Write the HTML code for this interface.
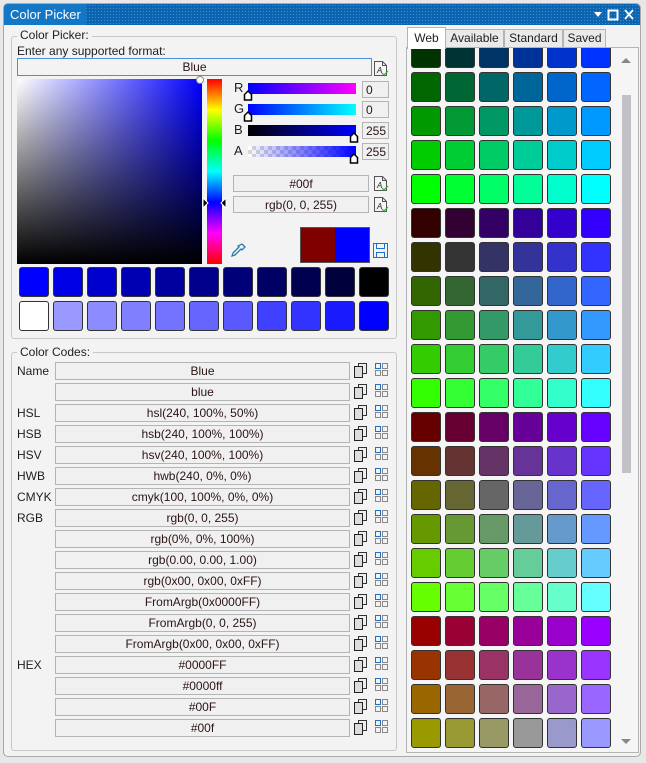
<!DOCTYPE html>
<html><head><meta charset="utf-8">
<style>
*{box-sizing:border-box;margin:0;padding:0}
body{width:646px;height:763px;background:#e8e8e8;font-family:"Liberation Sans",sans-serif;font-size:12px;color:#1e1e1e;position:relative;overflow:hidden}
.a{position:absolute}
.win{left:3px;top:3px;width:638px;height:754px;background:#f3f3f3;border:1px solid #a9a9a9;border-radius:5px;overflow:hidden}
.title{left:0;top:0;width:638px;height:21px;background:#0b64b0;background-image:radial-gradient(#3a8ad0 0.7px,transparent 0.8px);background-size:3px 3px}
.ttl{left:0;top:0;width:82px;height:21px;background:#1377c8;color:#fff;font-size:13px;line-height:21px;padding-left:6px}
.gb{border:1px solid #c8c8c8;border-radius:3px}
.gl{background:#f3f3f3;padding:0 3px;font-size:12px;line-height:13px}
.tb{background:#f0f0f0;border:1px solid #b4b4b4;text-align:center;line-height:16px;font-size:12px;color:#2a1414}
.sw{border:1px solid #333;border-radius:3px}
.lbl{font-size:12px}
</style></head><body>
<div class="a win">
 <div class="a title"><div class="a ttl">Color Picker</div>
  <svg class="a" style="left:586px;top:5px" width="50" height="12"><path d="M4 3h8l-4 5z" fill="#fff"/><rect x="18.5" y="1.5" width="9" height="9" fill="none" stroke="#fff" stroke-width="2"/><path d="M35 1l8 9M43 1l-8 9" stroke="#fff" stroke-width="1.8"/></svg>
 </div>
</div>
<div class="a gb" style="left:11px;top:36px;width:386px;height:303px"></div>
<div class="a gl" style="left:17px;top:29px">Color Picker:</div>
<div class="a lbl" style="left:17px;top:44px">Enter any supported format:</div>
<div class="a tb" style="left:17px;top:58px;width:355px;height:18px;border-color:#4a90d9;background:#f3f3f3">Blue</div>
<svg class="a" style="left:373px;top:60px" width="16" height="17"></svg>
<div class="a" style="left:17px;top:79px;width:185px;height:185px;background:linear-gradient(to bottom,rgba(0,0,0,0),#000),linear-gradient(to right,#fff,#00f)"></div>
<div class="a" style="left:196px;top:76px;width:8px;height:8px;border:1px solid #888;border-radius:50%;background:#fff"></div>
<div class="a" style="left:207px;top:79px;width:15px;height:185px;background:linear-gradient(#f00,#ff0 16.7%,#0f0 33.3%,#0ff 50%,#00f 66.7%,#f0f 83.3%,#f00)"></div>
<svg class="a" style="left:202px;top:197px" width="25" height="12"><path d="M1 1l5 5-5 5z" fill="#000" stroke="#fff"/><path d="M24 1l-5 5 5 5z" fill="#000" stroke="#fff"/></svg>
<div class="a" style="left:234px;top:80px;font-size:13px">R</div>
<div class="a" style="left:234px;top:101px;font-size:13px">G</div>
<div class="a" style="left:234px;top:122px;font-size:13px">B</div>
<div class="a" style="left:234px;top:143px;font-size:13px">A</div>
<div class="a" style="left:248px;top:83px;width:108px;height:11px;background:linear-gradient(to right,#00f,#f0f)"></div>
<div class="a" style="left:248px;top:104px;width:108px;height:11px;background:linear-gradient(to right,#00f,#0ff)"></div>
<div class="a" style="left:248px;top:125px;width:108px;height:11px;background:linear-gradient(to right,#000,#00f)"></div>
<div class="a" style="left:248px;top:146px;width:108px;height:11px;background:linear-gradient(to right,rgba(0,0,255,0),#00f),repeating-conic-gradient(#d8d8d8 0 25%,#fff 0 50%) 0 0/8px 8px"></div>
<svg class="a" style="left:243px;top:89px" width="10" height="12"><path d="M1.5 11V5.5L5 2l3.5 3.5V11z" fill="#fff" stroke="#000" stroke-width="1.5"/></svg>
<svg class="a" style="left:243px;top:110px" width="10" height="12"><path d="M1.5 11V5.5L5 2l3.5 3.5V11z" fill="#fff" stroke="#000" stroke-width="1.5"/></svg>
<svg class="a" style="left:349px;top:131px" width="10" height="12"><path d="M1.5 11V5.5L5 2l3.5 3.5V11z" fill="#fff" stroke="#000" stroke-width="1.5"/></svg>
<svg class="a" style="left:349px;top:152px" width="10" height="12"><path d="M1.5 11V5.5L5 2l3.5 3.5V11z" fill="#fff" stroke="#000" stroke-width="1.5"/></svg>
<div class="a tb" style="left:362px;top:81px;width:27px;height:17px;text-align:left;padding-left:3px">0</div>
<div class="a tb" style="left:362px;top:101px;width:27px;height:17px;text-align:left;padding-left:3px">0</div>
<div class="a tb" style="left:362px;top:122px;width:27px;height:17px;text-align:left;padding-left:3px">255</div>
<div class="a tb" style="left:362px;top:143px;width:27px;height:17px;text-align:left;padding-left:3px">255</div>
<div class="a tb" style="left:233px;top:175px;width:136px;height:17px">#00f</div>
<div class="a tb" style="left:233px;top:196px;width:136px;height:17px">rgb(0, 0, 255)</div>
<svg class="a" style="left:373px;top:175px" width="16" height="17"></svg>
<svg class="a" style="left:373px;top:196px" width="16" height="17"></svg>
<svg class="a" style="left:230px;top:242px" width="16" height="18"><path d="M12 2l3 3-3 3-1-1-6 6-3 1 1-3 6-6-1-1z" fill="none" stroke="#2a7ab0" stroke-width="1.3"/></svg>
<div class="a" style="left:300px;top:227px;width:70px;height:36px;border:1px solid #555;background:linear-gradient(to right,#800000 50%,#00f 50%)"></div>
<svg class="a" style="left:373px;top:243px" width="16" height="16"><rect x="0.5" y="0.5" width="14" height="14" fill="none" stroke="#1a6fd0"/><rect x="3.5" y="0.5" width="8" height="5" fill="none" stroke="#1a6fd0"/><rect x="3.5" y="9.5" width="8" height="5" fill="none" stroke="#1a6fd0"/></svg>
<div id="sw"></div>
<div class="a gb" style="left:11px;top:352px;width:386px;height:399px"></div>
<div class="a gl" style="left:17px;top:346px">Color Codes:</div>
<div id="codes"></div>
<div class="a" style="left:406px;top:47px;width:233px;height:706px;border:1px solid #b4b4b4;background:#f5f5f5;overflow:hidden"><div id="pal"></div>
 <div class="a" style="left:215px;top:47px;width:9px;height:378px;background:#c2c2c6"></div>
 <svg class="a" style="left:213px;top:9px" width="12" height="8"><path d="M1 6l5-5 5 5z" fill="#888"/></svg>
 <svg class="a" style="left:213px;top:690px" width="12" height="8"><path d="M1 1l5 5 5-5z" fill="#888"/></svg>
</div>
<div class="a" style="left:445px;top:29px;width:59px;height:19px;border:1px solid #b4b4b4;background:#eaeaea;text-align:center;line-height:17px">Available</div>
<div class="a" style="left:504px;top:29px;width:59px;height:19px;border:1px solid #b4b4b4;background:#eaeaea;text-align:center;line-height:17px">Standard</div>
<div class="a" style="left:563px;top:29px;width:43px;height:19px;border:1px solid #b4b4b4;background:#eaeaea;text-align:center;line-height:17px">Saved</div>
<div class="a" style="left:407px;top:27px;width:39px;height:22px;border:1px solid #b4b4b4;border-bottom:none;background:#fff;text-align:center;line-height:20px">Web</div>
<script>
function icA(){return '<path d="M1.5 1.5h8l4 4v10h-12z" fill="#f5f5f5" stroke="#555"/><path d="M9.5 1.5v4h4" fill="none" stroke="#555"/><text x="4" y="13" font-size="8" font-style="italic" fill="#222" font-family="Liberation Sans">A</text><path d="M9 13l2 2 4-4" fill="none" stroke="#3a3" stroke-width="1.2"/>';}
document.querySelectorAll('svg[width="16"][height="17"]').forEach(s=>s.innerHTML=icA());
var h='';
var r1=['#0000ff','#0000e6','#0000cc','#0000b3','#00009f','#00008c','#000078','#000064','#000050','#00003c','#000000'];
var r2=['#ffffff','#9999ff','#8c8cff','#8080ff','#7373ff','#6666ff','#5959ff','#4040ff','#3333ff','#1a1aff','#0000ff'];
for(var i=0;i<11;i++){h+='<div class="a sw" style="left:'+(19+i*34)+'px;top:267px;width:30px;height:30px;background:'+r1[i]+'"></div>';
h+='<div class="a sw" style="left:'+(19+i*34)+'px;top:301px;width:30px;height:30px;background:'+r2[i]+'"></div>';}
document.getElementById('sw').outerHTML=h;
var L=['Name','','HSL','HSB','HSV','HWB','CMYK','RGB','','','','','','','HEX','','',''];
var V=['Blue','blue','hsl(240, 100%, 50%)','hsb(240, 100%, 100%)','hsv(240, 100%, 100%)','hwb(240, 0%, 0%)','cmyk(100, 100%, 0%, 0%)','rgb(0, 0, 255)','rgb(0%, 0%, 100%)','rgb(0.00, 0.00, 1.00)','rgb(0x00, 0x00, 0xFF)','FromArgb(0x0000FF)','FromArgb(0, 0, 255)','FromArgb(0x00, 0x00, 0xFF)','#0000FF','#0000ff','#00F','#00f'];
h='';
for(var i=0;i<18;i++){var y=362+i*21;
h+='<div class="a lbl" style="left:17px;top:'+(y+2)+'px">'+L[i]+'</div>';
h+='<div class="a tb" style="left:55px;top:'+y+'px;width:295px;height:18px">'+V[i]+'</div>';
h+='<svg class="a" style="left:353px;top:'+(y+1)+'px" width="16" height="16"><rect x="5.5" y="0.5" width="8" height="10" fill="#eee" stroke="#333"/><rect x="1.5" y="3.5" width="8" height="11" fill="#ddd" stroke="#222"/></svg>';
h+='<svg class="a" style="left:375px;top:'+(y+1)+'px" width="14" height="14"><rect x="0.5" y="0.5" width="5" height="5" fill="none" stroke="#1a6fd0"/><rect x="7.5" y="0.5" width="5" height="5" fill="none" stroke="#888"/><rect x="0.5" y="7.5" width="5" height="5" fill="none" stroke="#888"/><rect x="7.5" y="7.5" width="5" height="5" fill="none" stroke="#888"/></svg>';}
document.getElementById('codes').outerHTML=h;
var d=['00','33','66','99','cc','ff'];h='';
var rows=[];rows.push(['00','33']);
for(var r=0;r<4;r++)for(var g=0;g<6;g++){if(r==0&&g<2)continue;rows.push([d[r],d[g]]);}
for(var i=0;i<rows.length;i++){var y=-10+i*34;if(y>706)break;
for(var b=0;b<6;b++)h+='<div class="a sw" style="left:'+(4+b*34)+'px;top:'+y+'px;width:30px;height:30px;background:#'+rows[i][0]+rows[i][1]+d[b]+'"></div>';}
document.getElementById('pal').outerHTML=h;
</script>
</body></html>
